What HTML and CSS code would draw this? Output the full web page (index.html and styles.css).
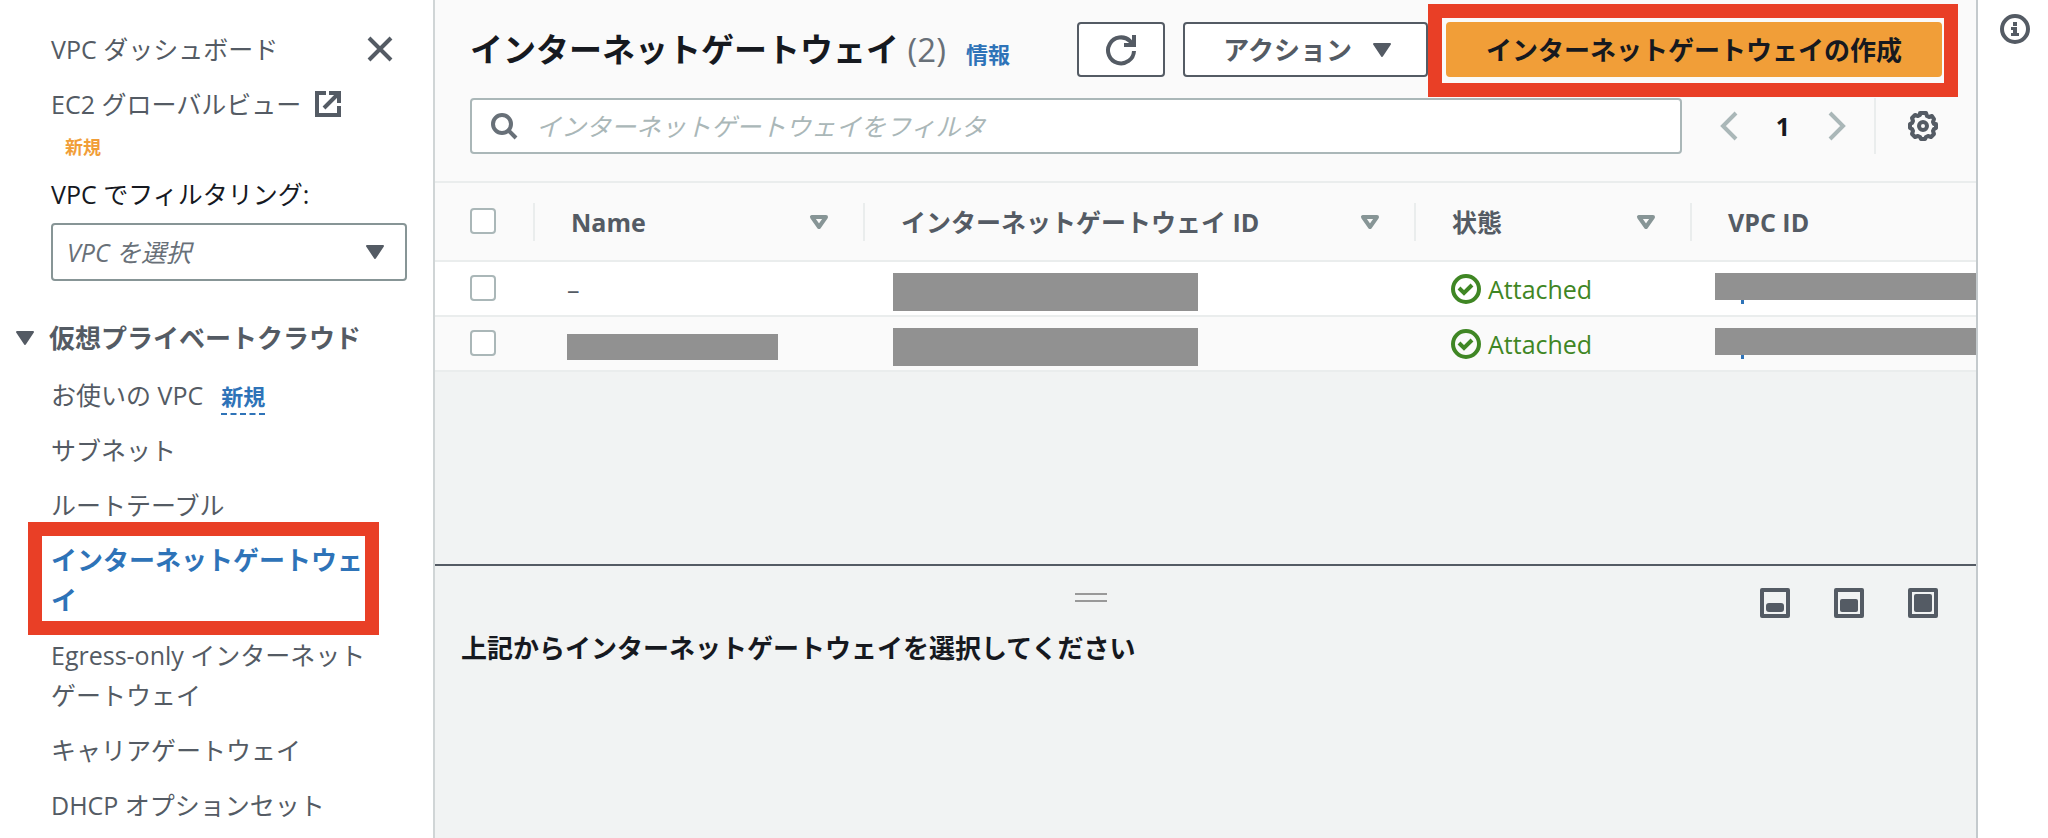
FILE: index.html
```html
<!DOCTYPE html>
<html lang="ja">
<head>
  <meta charset="utf-8">
  <title>インターネットゲートウェイ | VPC</title>
  <link rel="stylesheet" href="styles.css">
</head>
<body>
  <nav class="sidebar">
    <div class="side-top">
      <a href="#">VPC ダッシュボード</a>
      <button type="button" class="icon-button" aria-label="閉じる">
        <svg width="26" height="26" viewBox="0 0 26 26"><path d="M2 2l22 22M24 2L2 24" fill="none" stroke="#545b64" stroke-width="4"/></svg>
      </button>
    </div>
    <a class="global-view" href="#">EC2 グローバルビュー
      <svg width="26" height="26" viewBox="0 0 26 26" fill="none" stroke="#545b64" stroke-width="4"><path d="M11 2H2v22h22v-9M9 17L22 4M14 2h10v10"/></svg>
    </a>
    <span class="tag-new">新規</span>
    <label class="filter-label" for="vpc">VPC でフィルタリング:</label>
    <div class="select-wrap">
      <select id="vpc"><option>VPC を選択</option></select>
      <svg class="select-arrow" width="20" height="16" viewBox="0 0 20 16"><path d="M2 2h16l-8 12z" fill="#545b64" stroke="#545b64" stroke-width="2" stroke-linejoin="round"/></svg>
    </div>
    <h2 class="side-heading">
      <svg width="20" height="16" viewBox="0 0 20 16"><path d="M2 2h16l-8 12z" fill="#545b64" stroke="#545b64" stroke-width="2" stroke-linejoin="round"/></svg>
      仮想プライベートクラウド
    </h2>
    <ul class="side-list">
      <li><a href="#">お使いの VPC</a><a class="new-link" href="#">新規</a></li>
      <li><a href="#">サブネット</a></li>
      <li><a href="#">ルートテーブル</a></li>
      <li class="active"><a href="#">インターネットゲートウェイ</a></li>
      <li><a href="#">Egress-only インターネットゲートウェイ</a></li>
      <li><a href="#">キャリアゲートウェイ</a></li>
      <li><a href="#">DHCP オプションセット</a></li>
    </ul>
  </nav>

  <main class="main">
    <section class="list">
      <header class="list-header">
        <div class="title-row">
          <h1>インターネットゲートウェイ <span class="count">(2)</span></h1>
          <a class="info-link" href="#">情報</a>
          <div class="actions">
            <button type="button" class="btn btn-refresh" aria-label="更新">
              <svg width="32" height="32" viewBox="0 0 32 32" fill="none" stroke="#545b64" stroke-width="4"><path d="M29 17a13 13 0 1 1-4-10l3 4M29 1v10H19"/></svg>
            </button>
            <button type="button" class="btn">アクション
              <svg width="20" height="16" viewBox="0 0 20 16"><path d="M2 2h16l-8 12z" fill="#545b64" stroke="#545b64" stroke-width="2" stroke-linejoin="round"/></svg>
            </button>
            <div class="create">
              <button type="button" class="btn btn-primary">インターネットゲートウェイの作成</button>
            </div>
          </div>
        </div>
        <div class="filter-row">
          <label class="search">
            <svg width="28" height="28" viewBox="0 0 28 28" fill="none" stroke="#687078" stroke-width="4"><circle cx="12" cy="12" r="9"/><path d="M18 18l8 8"/></svg>
            <input type="text" aria-label="フィルタ" placeholder="インターネットゲートウェイをフィルタ">
          </label>
          <div class="pager">
            <button type="button" class="icon-button" aria-label="前へ">
              <svg width="18" height="30" viewBox="0 0 18 30"><path d="M16 2L3 15l13 13" fill="none" stroke="#aab7b8" stroke-width="4"/></svg>
            </button>
            <span class="page">1</span>
            <button type="button" class="icon-button" aria-label="次へ">
              <svg width="18" height="30" viewBox="0 0 18 30"><path d="M2 2l13 13L2 28" fill="none" stroke="#aab7b8" stroke-width="4"/></svg>
            </button>
          </div>
          <button type="button" class="icon-button settings" aria-label="設定">
            <svg width="30" height="30" viewBox="0 0 30 30" fill="none" stroke="#545b64" stroke-width="4" stroke-linejoin="round"><path d="M12 2h6l1 3 2 1 3-1 2 3-1 3 1 2 2 0v4l-2 1-1 2 1 3-3 3-3-1-2 1-1 2h-4l-1-2-2-1-3 1-3-3 1-3-1-2-2-1v-4l2-1 1-2-1-3 3-3 3 1 2-1z"/><circle cx="15" cy="15" r="4"/></svg>
          </button>
        </div>
      </header>
      <table>
        <thead>
          <tr>
            <th class="col-check"><input type="checkbox" aria-label="すべて選択"></th>
            <th class="col-name"><div class="th">Name <svg width="20" height="16" viewBox="0 0 20 16"><path d="M3 3h14l-7 10z" fill="none" stroke="#879596" stroke-width="4" stroke-linejoin="round"/></svg></div></th>
            <th class="col-id"><div class="th">インターネットゲートウェイ ID <svg width="20" height="16" viewBox="0 0 20 16"><path d="M3 3h14l-7 10z" fill="none" stroke="#879596" stroke-width="4" stroke-linejoin="round"/></svg></div></th>
            <th class="col-state"><div class="th">状態 <svg width="20" height="16" viewBox="0 0 20 16"><path d="M3 3h14l-7 10z" fill="none" stroke="#879596" stroke-width="4" stroke-linejoin="round"/></svg></div></th>
            <th><div class="th">VPC ID</div></th>
          </tr>
        </thead>
        <tbody>
          <tr>
            <td class="col-check"><input type="checkbox" aria-label="行 1 を選択"></td>
            <td class="cell-name">–</td>
            <td class="cell-id"><span class="mask"></span></td>
            <td><span class="state"><svg width="30" height="30" viewBox="0 0 30 30" fill="none" stroke="#3f8624" stroke-width="4"><circle cx="15" cy="15" r="13"/><path d="M8 14l5 5 8-8"/></svg>Attached</span></td>
            <td class="cell-vpc"><span class="mask"></span></td>
          </tr>
          <tr>
            <td class="col-check"><input type="checkbox" aria-label="行 2 を選択"></td>
            <td class="cell-name"><span class="mask"></span></td>
            <td class="cell-id"><span class="mask"></span></td>
            <td><span class="state"><svg width="30" height="30" viewBox="0 0 30 30" fill="none" stroke="#3f8624" stroke-width="4"><circle cx="15" cy="15" r="13"/><path d="M8 14l5 5 8-8"/></svg>Attached</span></td>
            <td class="cell-vpc"><span class="mask"></span></td>
          </tr>
        </tbody>
      </table>
    </section>

    <section class="details">
      <div class="details-bar">
        <div class="handle"></div>
        <div class="layout-buttons">
          <button type="button" class="icon-button" aria-label="小">
            <svg width="30" height="30" viewBox="0 0 30 30"><rect x="2" y="2" width="26" height="26" fill="none" stroke="#545b64" stroke-width="4" stroke-linejoin="round"/><rect x="6" y="15" width="18" height="9" rx="3" fill="#545b64"/></svg>
          </button>
          <button type="button" class="icon-button" aria-label="中">
            <svg width="30" height="30" viewBox="0 0 30 30"><rect x="2" y="2" width="26" height="26" fill="none" stroke="#545b64" stroke-width="4" stroke-linejoin="round"/><rect x="6" y="11" width="18" height="13" rx="2" fill="#545b64"/></svg>
          </button>
          <button type="button" class="icon-button" aria-label="大">
            <svg width="30" height="30" viewBox="0 0 30 30"><rect x="2" y="2" width="26" height="26" fill="none" stroke="#545b64" stroke-width="4" stroke-linejoin="round"/><rect x="6" y="6" width="18" height="18" rx="2" fill="#545b64"/></svg>
          </button>
        </div>
      </div>
      <p>上記からインターネットゲートウェイを選択してください</p>
    </section>
  </main>

  <aside class="help">
    <button type="button" class="icon-button" aria-label="情報">
      <svg width="30" height="30" viewBox="0 0 30 30"><circle cx="15" cy="15" r="13" fill="none" stroke="#545b64" stroke-width="4"/><path d="M13 8h4v4h-4zM11 13h6v6h2v3h-8v-3h2v-3h-2z" fill="#545b64"/></svg>
    </button>
  </aside>
</body>
</html>
```

FILE: styles.css
```css
* {
  box-sizing: border-box;
}

body {
  display: flex;
  height: 100vh;
  margin: 0;
  overflow: hidden;
  font-family: "Open Sans", "Noto Sans CJK JP", sans-serif;
  font-size: 25px;
  line-height: 40px;
  color: #545b64;
  background: #fff;
}

a {
  color: inherit;
  text-decoration: none;
}

svg {
  display: block;
  flex: none;
}

button, input, select {
  font: inherit;
  color: inherit;
}

h1, h2, p, ul {
  margin: 0;
  padding: 0;
}

.icon-button {
  padding: 0;
  border: none;
  background: none;
  cursor: pointer;
}

/* sidebar */
.sidebar {
  display: flex;
  flex-direction: column;
  flex: 0 0 433px;
  padding: 29px 26px 0 51px;
}

.side-top {
  display: flex;
  justify-content: space-between;
  align-items: center;
  padding-right: 14px;
}

.global-view {
  display: flex;
  align-items: center;
  gap: 14px;
  margin-top: 15px;
}

.tag-new {
  padding-left: 14px;
  margin-top: 3px;
  font-size: 18px;
  font-weight: bold;
  color: #f19e38;
}

.filter-label {
  margin: 7px 0 9px;
  color: #16191f;
}

.select-wrap {
  position: relative;
}

.select-wrap select {
  width: 100%;
  height: 58px;
  padding: 0 14px;
  border: 2px solid #879596;
  border-radius: 4px;
  background: #fff;
  color: #687078;
  font-style: italic;
  appearance: none;
}

.select-arrow {
  position: absolute;
  right: 22px;
  top: 21px;
}

.side-heading {
  display: flex;
  align-items: center;
  gap: 14px;
  margin: 37px 0 17px -36px;
  font-size: 26px;
}

.side-list {
  display: flex;
  flex-direction: column;
  gap: 15px;
  padding-right: 34px;
  list-style: none;
}

.new-link {
  margin-left: 18px;
  padding-bottom: 2px;
  border-bottom: 2px dashed #2e73b8;
  font-size: 22px;
  line-height: 28px;
  font-weight: bold;
  color: #2e73b8;
}

.active {
  position: relative;
  font-size: 26px;
  font-weight: bold;
  color: #2e73b8;
}

.active::after,
.create::after {
  content: "";
  position: absolute;
  border: 14px solid #e93f26;
  pointer-events: none;
}

.active::after {
  inset: -18px -6px -15px -23px;
}

/* main */
.main {
  display: flex;
  flex-direction: column;
  flex: 1;
  min-width: 0;
  border-left: 2px solid #d0d5d6;
  border-right: 2px solid #c4cacd;
  background: #f1f3f3;
}

.list {
  flex: 1;
  overflow: hidden;
}

.list-header {
  padding: 22px 34px 27px 35px;
  background: #fafafa;
}

.title-row {
  display: flex;
  align-items: center;
}

h1 {
  font-size: 33px;
  color: #16191f;
}

.count {
  font-weight: normal;
  color: #687078;
}

.info-link {
  margin: 8px 0 0 20px;
  font-size: 22px;
  font-weight: bold;
  color: #2e73b8;
}

.actions {
  display: flex;
  gap: 18px;
  margin-left: auto;
}

.btn {
  display: flex;
  align-items: center;
  gap: 20px;
  height: 55px;
  padding: 0 34px 0 38px;
  border: 2px solid #545b64;
  border-radius: 4px;
  background: #fff;
  font-size: 26px;
  font-weight: bold;
}

.btn-refresh {
  padding: 0 26px;
}

.btn-primary {
  padding: 0 38px;
  border-color: #f19e38;
  background: #f19e38;
  color: #16191f;
}

.create {
  position: relative;
}

.create::after {
  inset: -18px -16px -20px -18px;
}

.filter-row {
  display: flex;
  align-items: center;
  margin-top: 21px;
}

.search {
  display: flex;
  align-items: center;
  gap: 18px;
  flex: 1;
  height: 56px;
  padding: 0 18px;
  border: 2px solid #aab7b8;
  border-radius: 4px;
  background: #fff;
}

.search input {
  flex: 1;
  padding: 0;
  border: none;
  outline: none;
  background: none;
}

.search input::placeholder {
  color: #aab7b8;
  font-style: italic;
}

.pager {
  display: flex;
  align-items: center;
  justify-content: space-between;
  width: 194px;
  height: 56px;
  padding: 0 28px 0 38px;
  border-right: 2px solid #eaeded;
}

.page {
  font-weight: bold;
  color: #16191f;
}

.settings {
  margin: 0 4px 0 32px;
}

/* table */
table {
  width: 100%;
  table-layout: fixed;
  border-collapse: collapse;
  background: #fff;
}

th, td {
  padding: 0;
  text-align: left;
  border-bottom: 2px solid #eaeded;
}

th {
  height: 79px;
  border-top: 2px solid #eaeded;
  background: #fafafa;
}

td {
  height: 55px;
}

tbody tr:nth-child(2) {
  background: #fafafa;
}

.col-check {
  width: 98px;
  padding-left: 35px;
}

.col-name {
  width: 330px;
}

.col-id {
  width: 551px;
}

.col-state {
  width: 276px;
}

input[type="checkbox"] {
  display: block;
  width: 26px;
  height: 26px;
  margin: 0 0 2px;
  border: 2px solid #aab7b8;
  border-radius: 4px;
  background: #fff;
  appearance: none;
}

.th {
  display: flex;
  align-items: center;
  justify-content: space-between;
  height: 38px;
  padding: 0 34px 0 36px;
  border-left: 2px solid #eaeded;
}

.cell-name {
  padding-left: 34px;
}

.cell-id {
  padding-left: 30px;
}

.cell-vpc {
  padding-left: 25px;
}

.state {
  display: flex;
  align-items: center;
  gap: 7px;
  padding-left: 37px;
  color: #3f8624;
}

.mask {
  display: block;
  background: #919191;
}

.cell-name .mask {
  width: 211px;
  height: 26px;
  margin-top: 6px;
}

.cell-id .mask {
  width: 305px;
  height: 38px;
  margin-top: 6px;
}

.cell-vpc .mask {
  height: 27px;
  margin-bottom: 4px;
}

/* the tail of the id shows below its mask */
.cell-vpc .mask::after {
  content: "";
  display: block;
  width: 3px;
  height: 4px;
  margin-left: 26px;
  background: #2e73b8;
  transform: translateY(27px);
}

/* details panel */
.details {
  flex: 0 0 274px;
  border-top: 2px solid #545b64;
}

.details-bar {
  display: flex;
  align-items: flex-start;
  padding: 22px 38px 0 26px;
}

.handle {
  width: 32px;
  height: 9px;
  margin: 5px auto 0;
  border: solid #999;
  border-width: 2px 0;
}

.layout-buttons {
  display: flex;
  gap: 44px;
  padding-left: 40px;
}

.details p {
  padding: 10px 26px;
  font-size: 26px;
  font-weight: bold;
  color: #16191f;
}

.help {
  flex: 0 0 70px;
  padding: 14px 18px 0 22px;
}
```
